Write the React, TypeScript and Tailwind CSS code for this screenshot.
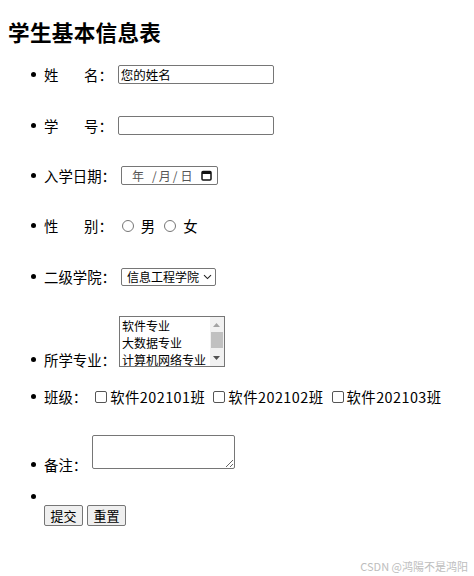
import type { ReactNode } from 'react';

const majors = ['软件专业', '大数据专业', '计算机网络专业'];
const classes = ['软件202101班', '软件202102班', '软件202103班'];

function Bullet() {
  return (
    <span className="flex h-[19px] w-[13px] shrink-0 items-center">
      <span className="h-[5px] w-[5px] rounded-full bg-black" />
    </span>
  );
}

function Row({ className, children }: { className: string; children: ReactNode }) {
  return (
    <li className={`flex ${className}`}>
      <Bullet />
      {children}
    </li>
  );
}

function Radio() {
  return <span className="ml-[9px] mr-[7px] inline-block h-[12px] w-[12px] shrink-0 rounded-full border border-[#767676] bg-white" />;
}

function Checkbox() {
  return <span className="ml-[8px] mr-[3px] inline-block h-[12px] w-[12px] shrink-0 rounded-[2px] border border-[#555]" />;
}

function CalendarIcon() {
  return (
    <svg width="11" height="11" viewBox="0 0 11 11" className="ml-auto mr-[5px]">
      <rect x="1" y="1.5" width="9" height="8.5" rx="1" fill="none" stroke="#111" strokeWidth="1.5" />
      <rect x="1" y="1.5" width="9" height="2.5" fill="#111" />
    </svg>
  );
}

export default function App() {
  return (
    <div className="relative min-h-[576px] bg-white font-['Noto_Sans_CJK_SC','Noto_Sans',sans-serif] text-[14.4px] leading-[19px] text-black">
      <h2 className="pl-[8px] pt-[18px] text-[21.6px] font-bold leading-[28px] tracking-[0.3px]">学生基本信息表</h2>

      <ul className="pl-[31px]">
        <Row className="mt-[19px] items-center">
          <span className="inline-block w-[40px]">姓</span>
          <span>名：</span>
          <input
            defaultValue="您的姓名"
            className="ml-[5px] h-[19px] w-[156px] rounded-[2px] border border-[#767676] px-[2px] text-[12.5px] leading-[17px] outline-none"
          />
        </Row>

        <Row className="mt-[32px] items-center">
          <span className="inline-block w-[40px]">学</span>
          <span>号：</span>
          <input className="ml-[5px] h-[19px] w-[156px] rounded-[2px] border border-[#767676] px-[2px] text-[12px] outline-none" />
        </Row>

        <Row className="mt-[31px] items-center">
          <span>入学日期：</span>
          <div className="ml-[5px] flex h-[19px] w-[97px] items-center rounded-[2px] border border-[#767676] text-[12px] leading-[17px] text-[#555]">
            <span className="ml-[10px]">年</span>
            <span className="ml-[8px]">/</span>
            <span className="ml-[2px]">月</span>
            <span className="ml-[2px]">/</span>
            <span className="ml-[3px]">日</span>
            <CalendarIcon />
          </div>
        </Row>

        <Row className="mt-[31px] items-center">
          <span className="inline-block w-[40px]">性</span>
          <span>别：</span>
          <Radio />
          <span>男</span>
          <Radio />
          <span>女</span>
        </Row>

        <Row className="mt-[32px] items-center">
          <span>二级学院：</span>
          <div className="ml-[5px] flex h-[18px] w-[95px] items-center rounded-[2px] border border-[#767676] pl-[5px] text-[12px] leading-[16px]">
            <span>信息工程学院</span>
            <svg width="9" height="6" viewBox="0 0 9 6" className="ml-auto mr-[3px]">
              <path d="M1 1.2 L4.5 4.6 L8 1.2" fill="none" stroke="#222" strokeWidth="1.1" />
            </svg>
          </div>
        </Row>

        <Row className="mt-[30px] items-end">
          <span>所学专业：</span>
          <div className="mb-[2px] ml-[3px] flex h-[51px] w-[106px] border border-[#767676] text-[12px] leading-[17px]">
            <div className="flex-1 pl-[2px]">
              {majors.map((m) => (
                <div key={m} className="whitespace-nowrap">
                  {m}
                </div>
              ))}
            </div>
            <div className="flex w-[14px] flex-col items-center bg-[#f1f1f1]">
              <svg width="7" height="4" viewBox="0 0 7 4" className="mt-[6px]">
                <path d="M0 4 L3.5 0 L7 4 Z" fill="#a3a3a3" />
              </svg>
              <div className="mt-[5px] h-[16px] w-[12px] bg-[#c1c1c1]" />
              <svg width="7" height="4" viewBox="0 0 7 4" className="mt-auto mb-[6px]">
                <path d="M0 0 L3.5 4 L7 0 Z" fill="#505050" />
              </svg>
            </div>
          </div>
        </Row>

        <Row className="mt-[18px] items-center">
          <span>班级：</span>
          {classes.map((c) => (
            <span key={c} className="flex items-center">
              <Checkbox />
              <span className="whitespace-nowrap tracking-[0.45px]">{c}</span>
            </span>
          ))}
        </Row>

        <Row className="mt-[29px] items-end">
          <span>备注：</span>
          <textarea className="mb-[5px] ml-[5px] h-[34px] w-[143px] rounded-[2px] border border-[#767676] text-[12px] outline-none" />
        </Row>

        <li className="mt-[14px]">
          <div className="flex h-[17px] items-center">
            <span className="h-[5px] w-[5px] rounded-full bg-black" />
          </div>
          <div className="flex gap-[4px] pl-[13px]">
            <button className="h-[21px] w-[39px] rounded-[2px] border border-[#767676] bg-[#efefef] text-[13px] leading-[19px]">提交</button>
            <button className="h-[21px] w-[39px] rounded-[2px] border border-[#767676] bg-[#efefef] text-[13px] leading-[19px]">重置</button>
          </div>
        </li>
      </ul>

      <div className="absolute bottom-[3px] right-[6px] text-[11px] leading-[14px] text-[#bdbdbd]">CSDN @鸿陽不是鸿阳</div>
    </div>
  );
}
